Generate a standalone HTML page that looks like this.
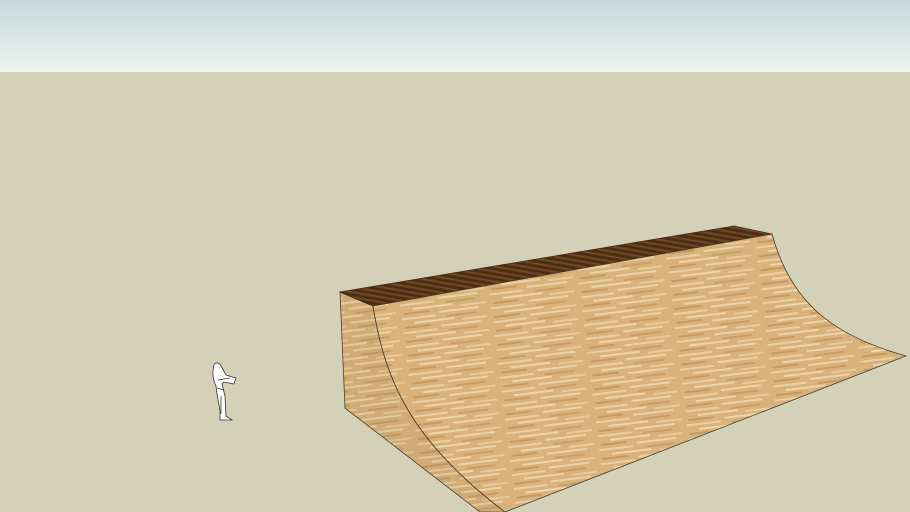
<!DOCTYPE html>
<html><head><style>
html,body{margin:0;padding:0;width:910px;height:512px;overflow:hidden;background:#d4d1b9}
</style></head><body>
<svg width="910" height="512" viewBox="0 0 910 512" xmlns="http://www.w3.org/2000/svg">
<defs>
<linearGradient id="sky" x1="0" y1="0" x2="0" y2="1">
<stop offset="0" stop-color="#c7d8d9"/><stop offset="1" stop-color="#edf2f0"/>
</linearGradient>
<pattern id="wood" width="90" height="14" patternUnits="userSpaceOnUse" patternTransform="rotate(-7)">
<rect width="90" height="14" fill="#d9b27b"/>
<rect x="0" y="1" width="34" height="2" fill="#e9d0a2"/>
<rect x="45" y="3" width="30" height="2" fill="#c79f66"/>
<rect x="12" y="6" width="40" height="2" fill="#ecd5a9"/>
<rect x="60" y="8" width="25" height="2" fill="#e6cb99"/>
<rect x="2" y="10" width="26" height="2" fill="#c39a60"/>
<rect x="38" y="12" width="40" height="2" fill="#ead3a6"/>
</pattern>
<pattern id="dark" width="5" height="20" patternUnits="userSpaceOnUse" patternTransform="rotate(-80)">
<rect width="5" height="20" fill="#5e3a1c"/>
<rect x="0" width="2" height="20" fill="#4a2c14"/>
<rect x="3" width="1" height="20" fill="#7a4e28"/>
</pattern>
</defs>
<rect width="910" height="71" fill="url(#sky)"/>
<rect y="70" width="910" height="2" fill="#f2f4ef"/>
<rect y="72" width="910" height="440" fill="#d4d1b9"/>
<path d="M340,292 L373,306 C385,380 410,440 505,512 L480,512 L345,408 Z" fill="url(#wood)" stroke="#4a3a28" stroke-width="0.8"/>
<path d="M340,292 L373,306 C385,380 410,440 505,512 L480,512 L345,408 Z" fill="#a07c48" opacity="0.12"/>
<path d="M340,292 L734,226 L772,234 L373,306 Z" fill="url(#dark)" stroke="#3a2a1a" stroke-width="0.8"/>
<path d="M373,306 L772,234 C790,300 830,335 906,356 L505,512 C410,440 385,380 373,306 Z" fill="url(#wood)" stroke="#4a3a28" stroke-width="0.8"/>
<g stroke="#333" stroke-width="0.8" fill="#fff">
<path d="M214,365 C212,372 213,380 216,386 L217,394 L220,410 L220,420 L232,420 L226,416 L225,396 L222,384 L224,382 L234,384 L236,378 L226,375 L221,366 C219,362 215,362 214,365 Z"/>
<path d="M218,380 L230,378 M217,388 L224,390 M221,396 L221,414" fill="none"/>
</g>
</svg>
</body></html>
